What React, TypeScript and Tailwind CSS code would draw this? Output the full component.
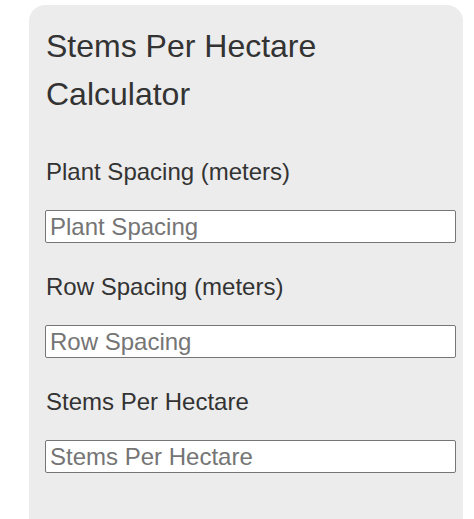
import React from 'react';

const fields = [
  { label: 'Plant Spacing (meters)', placeholder: 'Plant Spacing' },
  { label: 'Row Spacing (meters)', placeholder: 'Row Spacing' },
  { label: 'Stems Per Hectare', placeholder: 'Stems Per Hectare' },
];

export default function App() {
  return (
    <div className="h-[519px] overflow-hidden bg-white font-['Liberation_Sans',Arial,sans-serif] text-[#333]">
      <div className="ml-[29px] mt-[5px] w-[434px] h-[560px] bg-[#ececec] rounded-[16px] pl-[17px] pt-[17px]">
        <h1 className="text-[32px] leading-[48px] font-normal">
          Stems Per Hectare
          <br />
          Calculator
        </h1>
        <div className="mt-[36px] flex flex-col">
          {fields.map(f => (
            <div key={f.label} className="flex flex-col mb-[26px]">
              <label className="text-[24px] leading-[36px]">{f.label}</label>
              <input
                type="text"
                placeholder={f.placeholder}
                className="mt-[20px] ml-[-1px] w-[411px] h-[33px] bg-white border border-[#767676] rounded-[2px] px-[4px] text-[24px] text-[#333] placeholder:text-[#757575] outline-none"
              />
            </div>
          ))}
        </div>
      </div>
    </div>
  );
}
